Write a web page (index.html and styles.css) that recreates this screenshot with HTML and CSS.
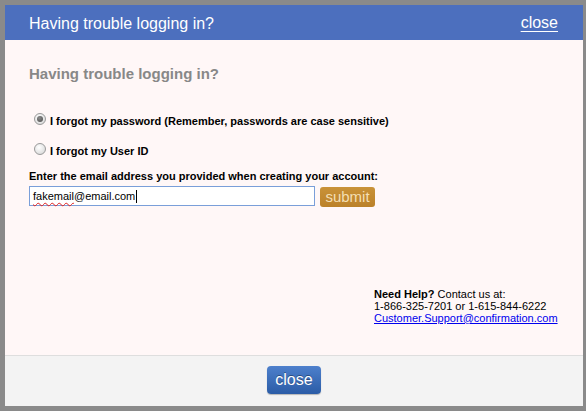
FILE: index.html
```html
<!DOCTYPE html>
<html lang="en">
<head>
<meta charset="utf-8">
<title>Having trouble logging in?</title>
<link rel="stylesheet" href="styles.css">
</head>
<body>
<div class="dialog">
  <div class="header">
    <span class="header-title">Having trouble logging in?</span>
    <a class="header-close" href="#">close</a>
  </div>
  <div class="main">
    <h2 class="heading">Having trouble logging in?</h2>
    <label class="option option-first">
      <span class="radio checked"></span>
      <span>I forgot my password (Remember, passwords are case sensitive)</span>
    </label>
    <label class="option option-second">
      <span class="radio"></span>
      <span>I forgot my User ID</span>
    </label>
    <div class="email-label">Enter the email address you provided when creating your account:</div>
    <div class="email-row">
      <div class="email-input"><span class="misspelled">fakemail</span>@email.com<span class="caret"></span></div>
      <button class="submit" type="button">submit</button>
    </div>
    <div class="help-wrap">
      <div class="help">
        <div><b>Need Help?</b> Contact us at:</div>
        <div>1-866-325-7201 or 1-615-844-6222</div>
        <div><a class="help-link" href="#">Customer.Support@confirmation.com</a></div>
      </div>
    </div>
  </div>
  <div class="footer">
    <button class="close-btn" type="button">close</button>
  </div>
</div>
</body>
</html>
```
FILE: styles.css
```css
html, body {
  margin: 0;
  padding: 0;
}
body {
  width: 586px;
  height: 411px;
  background: #8a8a8a;
  font-family: "Liberation Sans", Arial, sans-serif;
  overflow: hidden;
}
.dialog {
  margin: 5px 0 0 5px;
  width: 578px;
  height: 401px;
  display: flex;
  flex-direction: column;
  background: #fff7f7;
}
.header {
  height: 35px;
  flex: none;
  display: flex;
  align-items: center;
  justify-content: space-between;
  padding: 0 25px 0 24px;
  background: #4c6fbe;
  color: #fff;
}
.header-title {
  font-size: 16px;
  line-height: 18px;
  padding-top: 2px;
}
.header-close {
  color: #fff;
  font-size: 16px;
  line-height: 18px;
  padding-top: 1px;
  text-decoration: underline;
  text-underline-offset: 3px;
}
.main {
  flex: 1;
  display: flex;
  flex-direction: column;
  padding: 25px 24px 0 24px;
}
.heading {
  margin: 0;
  font-size: 15px;
  line-height: 17px;
  font-weight: bold;
  color: #888888;
}
.option {
  display: flex;
  align-items: flex-start;
  font-size: 11px;
  line-height: 13px;
  font-weight: bold;
  color: #000;
}
.option-first {
  margin-top: 33px;
}
.option-second {
  margin-top: 17px;
}
.radio {
  flex: none;
  box-sizing: border-box;
  width: 12px;
  height: 12px;
  margin: -2px 4px 0 5px;
  border-radius: 50%;
  border: 1px solid #9a9a9a;
  background: radial-gradient(circle at 40% 35%, #ffffff 0%, #e4e4e4 60%, #cfcfcf 100%);
  display: flex;
  align-items: center;
  justify-content: center;
}
.radio.checked::after {
  content: "";
  width: 6px;
  height: 6px;
  border-radius: 50%;
  background: radial-gradient(circle at 40% 35%, #8a8a8a 0%, #4a4a4a 100%);
}
.email-label {
  margin-top: 12px;
  font-size: 11px;
  line-height: 13px;
  font-weight: bold;
  color: #000;
}
.email-row {
  margin-top: 3px;
  display: flex;
  align-items: flex-start;
}
.email-input {
  box-sizing: border-box;
  width: 286px;
  height: 20px;
  border: 1px solid #7a9fd9;
  background: #fff;
  padding: 0 0 0 3px;
  font-size: 11px;
  line-height: 18px;
  color: #000;
  display: flex;
  align-items: center;
}
.misspelled {
  text-decoration: underline wavy #e02020;
  text-decoration-thickness: 1px;
  text-underline-offset: 2px;
}
.caret {
  width: 1px;
  height: 13px;
  background: #000;
  margin-left: 1px;
}
.submit {
  margin: 1px 0 0 5px;
  width: 55px;
  height: 20px;
  border: 0;
  border-radius: 3px;
  background: linear-gradient(#c99238, #bb8129);
  color: #f4dfb4;
  font-family: "Liberation Sans", Arial, sans-serif;
  font-size: 15px;
  line-height: 20px;
  padding: 0;
}
.help-wrap {
  display: flex;
  justify-content: flex-end;
  margin-top: auto;
  padding-bottom: 31px;
}
.help {
  width: 185px;
  font-size: 11px;
  line-height: 12px;
  color: #000;
}
.help-link {
  color: #0000ee;
  text-decoration: underline;
}
.footer {
  flex: none;
  height: 50px;
  border-top: 1px solid #dedede;
  background: #f3f3f3;
  display: flex;
  align-items: flex-start;
  justify-content: center;
}
.close-btn {
  margin-top: 10px;
  width: 54px;
  height: 28px;
  border: 0;
  border-radius: 4px;
  background: linear-gradient(#4d80cc, #2b5ca6);
  box-shadow: 0 1px 1px rgba(0, 0, 0, 0.25);
  color: #fff;
  font-family: "Liberation Sans", Arial, sans-serif;
  font-size: 16px;
  line-height: 28px;
  padding: 0;
  text-shadow: 0 -1px 0 rgba(0, 0, 0, 0.35);
}
```
